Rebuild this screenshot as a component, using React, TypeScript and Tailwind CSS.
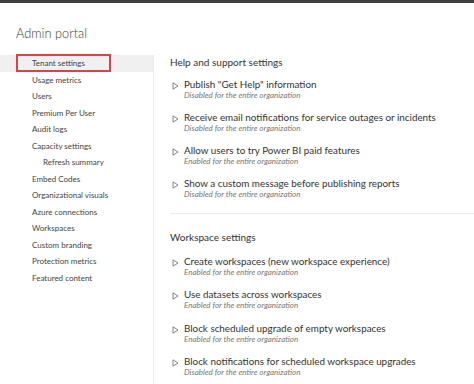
import React from 'react'

const font = { fontFamily: 'Lato, "Open Sans", sans-serif' }

const navItems: { label: string; indent?: boolean; active?: boolean }[] = [
  { label: 'Tenant settings', active: true },
  { label: 'Usage metrics' },
  { label: 'Users' },
  { label: 'Premium Per User' },
  { label: 'Audit logs' },
  { label: 'Capacity settings' },
  { label: 'Refresh summary', indent: true },
  { label: 'Embed Codes' },
  { label: 'Organizational visuals' },
  { label: 'Azure connections' },
  { label: 'Workspaces' },
  { label: 'Custom branding' },
  { label: 'Protection metrics' },
  { label: 'Featured content' },
]

const DISABLED = 'Disabled for the entire organization'
const ENABLED = 'Enabled for the entire organization'

const sections = [
  {
    title: 'Help and support settings',
    items: [
      { name: 'Publish "Get Help" information', state: DISABLED },
      { name: 'Receive email notifications for service outages or incidents', state: DISABLED },
      { name: 'Allow users to try Power BI paid features', state: ENABLED },
      { name: 'Show a custom message before publishing reports', state: DISABLED },
    ],
  },
  {
    title: 'Workspace settings',
    items: [
      { name: 'Create workspaces (new workspace experience)', state: ENABLED },
      { name: 'Use datasets across workspaces', state: ENABLED },
      { name: 'Block scheduled upgrade of empty workspaces', state: ENABLED },
      { name: 'Block notifications for scheduled workspace upgrades', state: DISABLED },
    ],
  },
]

function Caret() {
  return (
    <svg width="7" height="8" viewBox="0 0 7 8" className="mt-[3px] shrink-0">
      <path d="M1 0.8 L6 4 L1 7.2 Z" fill="none" stroke="#777" strokeWidth="0.9" strokeLinejoin="round" />
    </svg>
  )
}

export default function App() {
  return (
    <div className="h-[384px] w-[474px] overflow-hidden bg-white text-[#333]" style={font}>
      <div className="h-[3px] bg-[#3f3f3f]" />

      <h1 className="pl-[16px] pt-[19px] text-[12.8px] font-light leading-[22px] text-[#3a3a3a]">Admin portal</h1>

      <div className="mt-[11px] flex">
        {/* left nav */}
        <nav className="h-[400px] w-[154px] shrink-0 border-r border-[#ececec]">
          <ul>
            {navItems.map(n => (
              <li
                key={n.label}
                className={
                  'flex h-[16.5px] items-center text-[8px] leading-none text-[#444] ' +
                  (n.active ? 'bg-[#f0f0f0]' : '')
                }
              >
                {n.active ? (
                  <span className="ml-[16px] flex h-[18px] w-[95px] items-center border-2 border-[#d9444b] pl-[14px]">
                    {n.label}
                  </span>
                ) : (
                  <span className={n.indent ? 'pl-[43px]' : 'pl-[32px]'}>{n.label}</span>
                )}
              </li>
            ))}
          </ul>
        </nav>

        {/* settings */}
        <main className="flex-1 pl-[16px]">
          {sections.map((s, i) => (
            <section key={s.title} className={i > 0 ? 'mt-[2px] border-t border-[#ececec] pt-[16px]' : ''}>
              <h2 className="text-[10px] leading-[14px] text-[#333]">{s.title}</h2>
              <ul className={i > 0 ? 'mt-[12px]' : 'mt-[10px]'}>
                {s.items.map(it => (
                  <li key={it.name} className={'flex gap-[5px] pl-[2px] ' + (i > 0 ? 'h-[33.3px]' : 'h-[33px]')}>
                    <Caret />
                    <div>
                      <div className="text-[9.85px] leading-[11px] text-[#333]">{it.name}</div>
                      <div className="text-[8px] italic leading-[11px] text-[#777]">{it.state}</div>
                    </div>
                  </li>
                ))}
              </ul>
            </section>
          ))}
        </main>
      </div>
    </div>
  )
}
